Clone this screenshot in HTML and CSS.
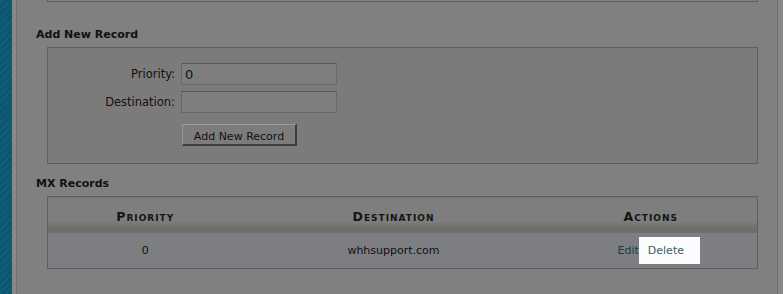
FILE: index.html
```html
<!DOCTYPE html>
<html>
	<head>
		<meta charset="utf-8">
		<title>MX Records</title>
		<link rel="stylesheet" href="styles.css">
	</head>
	<body>
		<div class="side"></div>
		<div class="gutter"></div>
		<div class="main">
			<div class="topbox"></div>

			<h3>Add New Record</h3>
			<div class="box form">
				<label for="prio">Priority:</label>
				<input id="prio" type="text" value="0" />
				<label for="dest">Destination:</label>
				<input id="dest" type="text" value="" />
				<span></span>
				<button type="button">Add New Record</button>
			</div>

			<h3 class="mx">MX Records</h3>
			<table class="box records">
				<tr>
					<th class="c1">Priority</th>
					<th class="c2">Destination</th>
					<th>Actions</th>
				</tr>
				<tr>
					<td>0</td>
					<td>whhsupport.com</td>
					<td><a href="#">Edit</a><a href="#" class="del">Delete</a></td>
				</tr>
			</table>
		</div>
		<div class="edge"></div>
	</body>
</html>
```

FILE: styles.css
```css
*{
	margin: 0;
	padding: 0;
	box-sizing: border-box;
}

body{
	display: flex;
	height: 294px;
	overflow: hidden;
	background: #808080;
	font-family: "DejaVu Sans", Verdana, sans-serif;
	font-size: 11px;
	color: #111;
}

.side{
	width: 12px;
	background: repeating-linear-gradient(-45deg, #0e5670 0, #0e5670 3px, #125e7a 3px, #125e7a 5px);
}
.gutter,.edge{
	background: #888888;
}
.gutter{
	width: 4px;
}
.edge{
	width: 5px;
}

.main{
	flex: 1;
	border-left: 1px solid #6e6e6e;
	border-right: 1px solid #6e6e6e;
	padding-left: 19px;
}

.topbox{
	width: 711px;
	height: 2px;
	margin-left: 11px;
	border: 1px solid #5a6260;
	border-top: none;
}

h3{
	font-size: 11px;
	line-height: 13px;
	margin-top: 26px;
	color: #111;
}
h3.mx{
	margin-top: 13px;
}

.box{
	width: 711px;
	margin-left: 11px;
	margin-top: 6px;
	border: 1px solid #5c625f;
}

.form{
	display: grid;
	grid-template-columns: 127px 156px;
	column-gap: 6px;
	row-gap: 6px;
	align-items: center;
	padding: 15px 0 17px 0;
	background: #7b7b7b;
}
.form label{
	text-align: right;
	font-size: 11.5px;
}
.form input{
	height: 22px;
	border: 1px solid #686868;
	border-top-color: #585858;
	background: #7e7e7e;
	padding-left: 3px;
	font-family: "DejaVu Sans", Verdana, sans-serif;
	font-size: 13px;
	color: #111;
	outline: none;
}
.form button{
	width: 115px;
	height: 22px;
	margin: 5px 0 0 1px;
	padding-top: 3px;
	border-style: solid;
	border-width: 1px 2px 2px 1px;
	border-color: #9a9a9a #3c3c3c #3c3c3c #9a9a9a;
	background: #7c7c7c;
	font-family: "DejaVu Sans", Verdana, sans-serif;
	font-size: 11px;
	color: #111;
}

.records{
	border-collapse: collapse;
	border-color: #5e5e5e;
	margin-top: 6px;
}
.records th{
	height: 36px;
	padding-top: 3px;
	font-size: 12.5px;
	font-variant: small-caps;
	letter-spacing: 1px;
	color: #141414;
	background: linear-gradient(#7e7e7e 0, #7e7e7e 66%, #6e6a66 90%, #73706d 100%);
}
.records th.c1{
	width: 195px;
}
.records th.c2{
	width: 302px;
}
.records td{
	height: 36px;
	text-align: center;
	font-size: 11px;
	background: #7c7e81;
	color: #111;
}
.records a{
	color: #1f3a44;
	text-decoration: none;
}
.records a.del{
	padding: 7px 16px 7px 9px;
	margin-right: -16px;
	background: #fafcfe;
	color: #3e5c68;
}
```
